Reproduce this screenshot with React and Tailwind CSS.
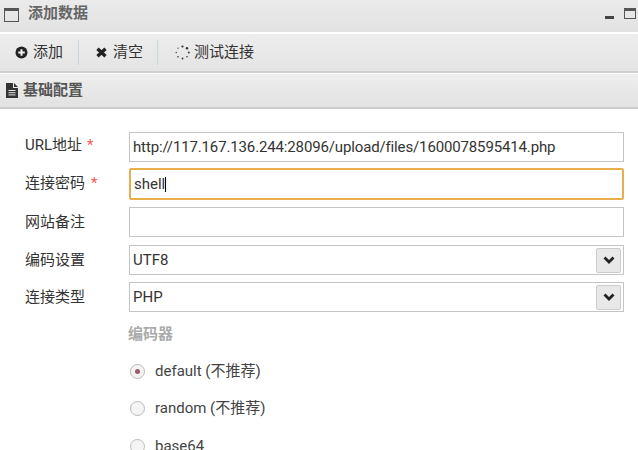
const font = { fontFamily: 'Roboto, "Noto Sans CJK SC", sans-serif' };

function WinIcon({ className }) {
  return (
    <span className={`box-border block border border-[#555] border-t-[3px] ${className}`} />
  );
}

function Spinner() {
  const pts = [[7.5, 1.5, 1.1], [12, 3.2, 1.2], [13.8, 7.5, 0.9], [12, 11.8, 0.8], [7.5, 13.5, 0.9], [3, 11.8, 0.8], [1.2, 7.5, 0.7], [3, 3.2, 0.6]];
  return (
    <svg width="15" height="15" viewBox="0 0 15 15">
      {pts.map(([x, y, r], i) => <circle key={i} cx={x} cy={y} r={r} fill="#333" />)}
    </svg>
  );
}

function Field({ label, required, starGap = "ml-[5px]", children, className = "border-[#c4c4c4]", h = "h-[30px]", labelOffset = "", rowClass = "" }) {
  return (
    <div className={`flex items-center ${rowClass}`}>
      <div className={`w-[129px] pl-[25px] text-[15px] leading-[20px] text-[#333] whitespace-nowrap ${labelOffset}`}>
        {label}
        {required && <span className={`${starGap} text-[#f55]`}>*</span>}
      </div>
      <div className={`box-border flex ${h} w-[495px] items-center border px-[3px] text-[15px] text-[#333] ${className}`}>
        {children}
      </div>
    </div>
  );
}

function SelectField({ label, value, rowClass }) {
  return (
    <Field label={label} rowClass={rowClass}>
      <span className="flex-1">{value}</span>
      <span className="-mr-[1px] flex h-[25px] w-[25px] items-center justify-center rounded-[2px] border border-[#ccc] bg-[#e8e8e8]">
        <svg width="12" height="8" viewBox="0 0 12 8">
          <path d="M1.5 1.5 L6 6 L10.5 1.5" fill="none" stroke="#222" strokeWidth="2.8" />
        </svg>
      </span>
    </Field>
  );
}

function Radio({ label, checked, className = "" }) {
  return (
    <div className={`flex h-[20px] items-center text-[15px] text-[#444] ${className}`}>
      <span className="flex h-[15px] w-[15px] items-center justify-center rounded-full border border-[#bbb] bg-[#f4f4f4]">
        {checked && <span className="h-[5px] w-[5px] rounded-full bg-[#a05a6a]" />}
      </span>
      <span className="ml-[10px] whitespace-nowrap">{label}</span>
    </div>
  );
}

export default function App() {
  return (
    <div className="h-[450px] w-[638px] overflow-hidden bg-white" style={font}>
      <div className="flex h-[32px] items-start bg-gradient-to-b from-[#ebebeb] to-[#e2e2e2] pl-[4px] pr-[2px] pt-[3px]">
        <WinIcon className="mt-[5px] h-[14px] w-[15px]" />
        <span className="ml-[9px] text-[15px] leading-[20px] font-bold text-[#666]">添加数据</span>
        <span className="ml-auto mt-[13px] h-[3px] w-[9px] bg-[#444]" />
        <WinIcon className="ml-[10px] mt-[5px] h-[11px] w-[12px]" />
      </div>
      <div className="box-border flex h-[41px] items-center border-t-2 border-b-2 border-t-white border-b-[#cfcfcf] bg-gradient-to-b from-[#ededed] to-[#e4e4e4] pb-[1px] pl-[15px] text-[15px] text-[#333]">
        <svg width="13" height="13" viewBox="0 0 13 13">
          <circle cx="6.5" cy="6.5" r="6" fill="#222" />
          <path d="M3.2 6.5h6.6M6.5 3.2v6.6" stroke="#f0f0f0" strokeWidth="2" />
        </svg>
        <span className="ml-[5px]">添加</span>
        <span className="ml-[15px] h-[25px] w-px bg-[#c9d6de]" />
        <svg className="ml-[17px]" width="11" height="11" viewBox="0 0 11 11">
          <path d="M1.5 1.8 L9.5 9.2 M9.5 1.8 L1.5 9.2" stroke="#222" strokeWidth="3.4" />
        </svg>
        <span className="ml-[6px]">清空</span>
        <span className="ml-[14px] h-[25px] w-px bg-[#c9d6de]" />
        <span className="ml-[17px] flex"><Spinner /></span>
        <span className="ml-[4px]">测试连接</span>
      </div>
      <div className="box-border flex h-[36px] items-center border-t border-b-2 border-t-white border-b-[#cdcdcd] bg-gradient-to-b from-[#eeeeee] to-[#e2e2e2] pl-[6px]">
        <svg width="12" height="15" viewBox="0 0 12 15">
          <path d="M0 0h7v5h5v10H0z" fill="#333" />
          <path d="M8 0l4 4H8z" fill="#333" />
          <path d="M2.5 7.5h7M2.5 9.7h7M2.5 11.9h7" stroke="#e6e6e6" strokeWidth="1" />
        </svg>
        <span className="ml-[5px] text-[15px] font-bold text-[#555]">基础配置</span>
      </div>
      <div className="flex flex-col gap-[7px] pt-[23px]">
        <Field label="URL地址" required labelOffset="-mt-[4px]">
          <span className="whitespace-nowrap tracking-[-0.14px]">http://117.167.136.244:28096/upload/files/1600078595414.php</span>
        </Field>
        <Field label="连接密码" required starGap="ml-[6px]" h="h-[32px]" rowClass="-mt-[1px]" className="rounded-[2px] border-2 border-[#e8ae4c]" labelOffset="-mt-[2px]">
          <span>shell</span>
          <span className="h-[15px] w-px bg-black" />
        </Field>
        <Field label="网站备注" />
        <SelectField label="编码设置" value="UTF8" rowClass="mt-[1px]" />
        <SelectField label="连接类型" value="PHP" />
      </div>
      <div className="ml-[128px] mt-[12px] text-[15px] leading-[20px] font-bold text-[#aaa]">编码器</div>
      <div className="ml-[130px] mt-[17px] flex flex-col gap-[17px]">
        <Radio label="default (不推荐)" checked />
        <Radio label="random (不推荐)" />
        <Radio label="base64" className="mt-[1px]" />
      </div>
    </div>
  );
}
